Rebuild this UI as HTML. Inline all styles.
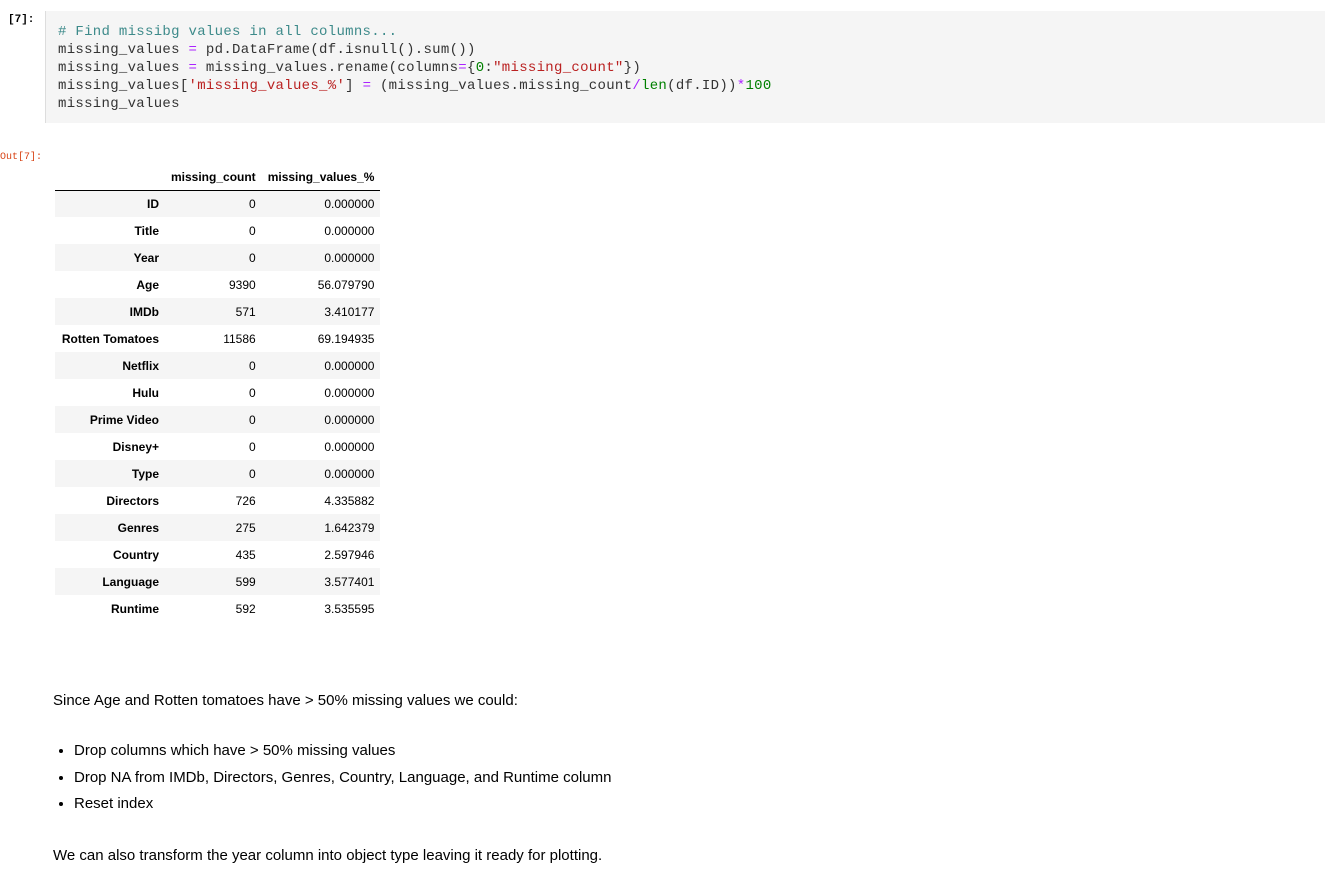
<!DOCTYPE html>
<html><head><style>
body{margin:0;background:#fff;font-family:"Liberation Sans",sans-serif;width:1334px;height:884px;position:relative;overflow:hidden}
.prompt{position:absolute;font-family:"Liberation Mono",monospace;font-size:11px}
.code{position:absolute;left:45px;top:11px;width:1280px;height:112px;background:#f5f5f5;border-left:1px solid #ddd;box-sizing:border-box}
.code pre{margin:0;position:absolute;left:12px;top:12px;font-family:"Liberation Mono",monospace;font-size:14px;line-height:18px;color:#333;letter-spacing:0.3px}
.c{color:#3d8a8a}.o{color:#aa22ff}.s{color:#ba2121}.n{color:#008000}
table{position:absolute;left:55px;top:165px;border-collapse:collapse;font-size:12px;color:#000}
th,td{height:27px;padding:0 6px;text-align:right;box-sizing:border-box}
thead th{height:25px;border-bottom:1px solid #000;font-weight:bold}
tbody tr:nth-child(odd){background:#f5f5f5}
tbody th{font-weight:bold}
.txt{position:absolute;left:53px;font-size:15px;color:#000}
ul{position:absolute;left:53px;top:738px;margin:0;padding-left:21px;font-size:15px;line-height:26.5px}
</style></head><body>
<div class="prompt" style="left:8px;top:14px;font-weight:bold">[7]:</div>
<div class="code"><pre><span class="c"># Find missibg values in all columns...</span>
missing_values <span class="o">=</span> pd.DataFrame(df.isnull().sum())
missing_values <span class="o">=</span> missing_values.rename(columns<span class="o">=</span>{<span class="n">0</span>:<span class="s">"missing_count"</span>})
missing_values[<span class="s">'missing_values_%'</span>] <span class="o">=</span> (missing_values.missing_count<span class="o">/</span><span class="n">len</span>(df.ID))<span class="o">*</span><span class="n">100</span>
missing_values</pre></div>
<div class="prompt" style="left:0;top:152px;color:#d84315;font-size:10px">Out[7]:</div>
<table>
<thead><tr><th style="width:110px"></th><th style="width:96px">missing_count</th><th style="width:118px">missing_values_%</th></tr></thead>
<tbody>
<tr><th>ID</th><td>0</td><td>0.000000</td></tr>
<tr><th>Title</th><td>0</td><td>0.000000</td></tr>
<tr><th>Year</th><td>0</td><td>0.000000</td></tr>
<tr><th>Age</th><td>9390</td><td>56.079790</td></tr>
<tr><th>IMDb</th><td>571</td><td>3.410177</td></tr>
<tr><th>Rotten Tomatoes</th><td>11586</td><td>69.194935</td></tr>
<tr><th>Netflix</th><td>0</td><td>0.000000</td></tr>
<tr><th>Hulu</th><td>0</td><td>0.000000</td></tr>
<tr><th>Prime Video</th><td>0</td><td>0.000000</td></tr>
<tr><th>Disney+</th><td>0</td><td>0.000000</td></tr>
<tr><th>Type</th><td>0</td><td>0.000000</td></tr>
<tr><th>Directors</th><td>726</td><td>4.335882</td></tr>
<tr><th>Genres</th><td>275</td><td>1.642379</td></tr>
<tr><th>Country</th><td>435</td><td>2.597946</td></tr>
<tr><th>Language</th><td>599</td><td>3.577401</td></tr>
<tr><th>Runtime</th><td>592</td><td>3.535595</td></tr>
</tbody></table>
<div class="txt" style="top:692px">Since Age and Rotten tomatoes have &gt; 50% missing values we could:</div>
<ul><li>Drop columns which have &gt; 50% missing values</li><li>Drop NA from IMDb, Directors, Genres, Country, Language, and Runtime column</li><li>Reset index</li></ul>
<div class="txt" style="top:847px">We can also transform the year column into object type leaving it ready for plotting.</div>
</body></html>
